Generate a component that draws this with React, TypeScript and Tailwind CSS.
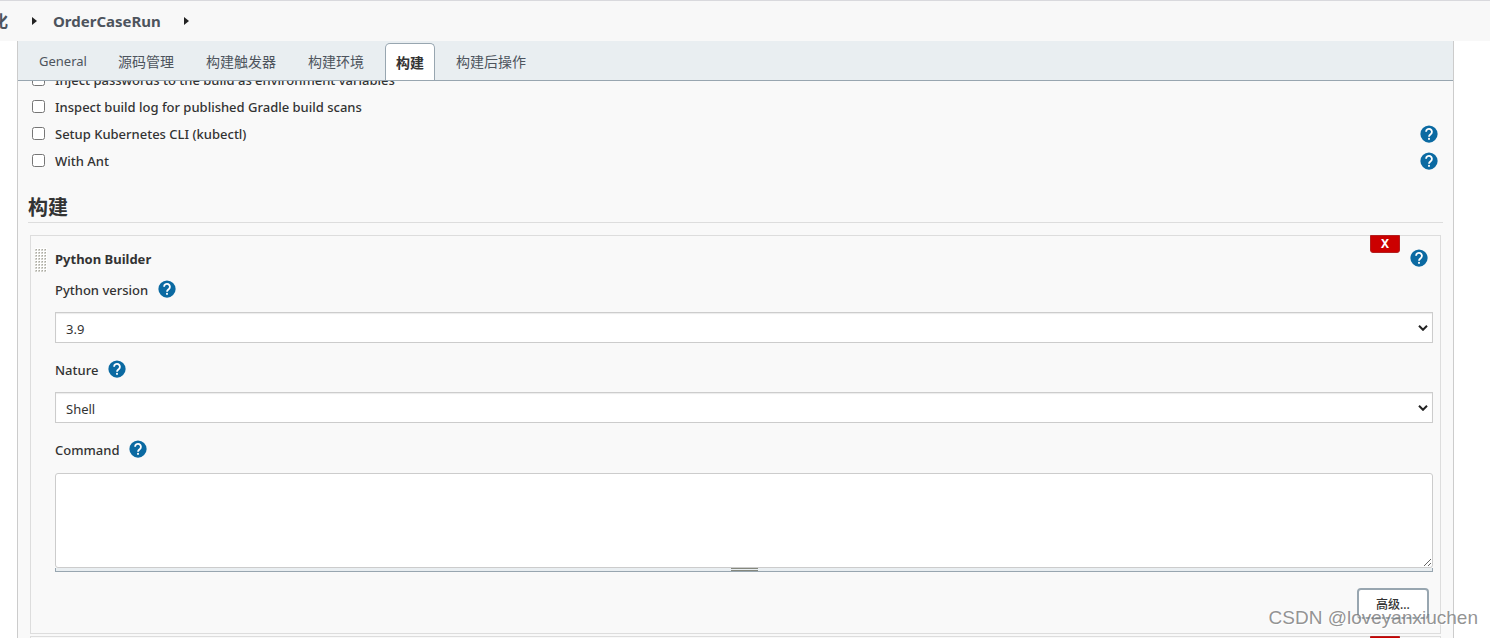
import type { ReactNode } from "react";

const uiFont =
  "font-['Noto_Sans','Noto_Sans_CJK_SC',sans-serif] text-[#333]";

function HelpButton({ topic }: { topic: string }) {
  return (
    <button type="button" aria-label={`Help for ${topic}`} className="mb-[2px] block size-[18px] shrink-0">
      <svg viewBox="0 0 24 24" className="size-full">
        <circle cx="12" cy="12" r="11.5" fill="#0b6aa2" />
        <path
          d="M8.1 9a3.9 3.9 0 1 1 6.4 3c-1.4 1.1-2.5 1.8-2.5 3.5"
          fill="none"
          stroke="#fff"
          strokeWidth="2.4"
        />
        <rect x="10.8" y="17.2" width="2.4" height="2.5" fill="#fff" />
      </svg>
    </button>
  );
}

function Caret() {
  return (
    <svg viewBox="0 0 5 8" className="h-2 w-[5px] shrink-0" aria-hidden="true">
      <path d="M0 0l5 4-5 4z" fill="#222" />
    </svg>
  );
}

const tabs = ["General", "源码管理", "构建触发器", "构建环境", "构建", "构建后操作"];

const options = [
  { id: "inject", label: "Inject passwords to the build as environment variables", help: false },
  { id: "gradle", label: "Inspect build log for published Gradle build scans", help: false },
  { id: "kubectl", label: "Setup Kubernetes CLI (kubectl)", help: true },
  { id: "ant", label: "With Ant", help: true },
];

function Grip() {
  return (
    <svg width="12" height="24" className="shrink-0" aria-hidden="true">
      <defs>
        <pattern id="grip" width="3" height="3" patternUnits="userSpaceOnUse">
          <rect width="3" height="3" fill="#fff" />
          <rect y="1" width="2" height="2" fill="#d2d2cc" />
          <rect x="1" y="1" width="1" height="1" fill="#aaa9a0" />
        </pattern>
      </defs>
      <rect width="12" height="24" fill="url(#grip)" />
    </svg>
  );
}

function Step({ children }: { children?: ReactNode }) {
  return (
    <div className="relative mx-[2px] border border-[#ddd]">
      <button
        type="button"
        aria-label="Delete"
        className="absolute -top-px right-10 h-[18px] w-[30px] rounded-b-[3px] border border-[#b32020] bg-[#c00] text-xs leading-4 font-bold text-white"
      >
        X
      </button>
      {children}
    </div>
  );
}

function FieldLabel({ htmlFor, children }: { htmlFor: string; children: string }) {
  return (
    <div className="flex h-5 items-center gap-[10px]">
      <label htmlFor={htmlFor} className="pt-[2px] font-medium">
        {children}
      </label>
      <HelpButton topic={children} />
    </div>
  );
}

function SelectField({ id, label, value }: { id: string; label: string; value: string }) {
  return (
    <>
      <FieldLabel htmlFor={id}>{label}</FieldLabel>
      <div className="mt-3 mb-[17px] grid items-center">
        <select
          id={id}
          className="col-start-1 row-start-1 h-[31px] w-full appearance-none border border-[#ccc] bg-white pt-[5px] pl-[10px] text-[13px] shadow-[inset_0_1px_1px_rgba(0,0,0,0.08)]"
        >
          <option>{value}</option>
        </select>
        <svg
          viewBox="0 0 10 6"
          className="pointer-events-none col-start-1 row-start-1 mr-[5px] h-[6px] w-[10px] justify-self-end"
          aria-hidden="true"
        >
          <path d="M1 .8l4 4 4-4" fill="none" stroke="#222" strokeWidth="2" />
        </svg>
      </div>
    </>
  );
}

export default function App() {
  return (
    <div className={`relative flex h-screen flex-col overflow-hidden bg-white text-[13px] ${uiFont}`}>
      <header className="flex h-[41px] shrink-0 items-center overflow-hidden border-t border-[#d9d9dd] bg-[#f8f8f8] font-bold text-[#4d545d]">
        <nav aria-label="Breadcrumb" className="-ml-2 flex items-center">
          <a href="#parent" className="w-10 text-base">化</a>
          <Caret />
          <a href="#job" className="mx-4 w-[115px] text-[15px]">OrderCaseRun</a>
          <Caret />
        </nav>
      </header>

      <main className="mr-9 ml-[17px] flex min-h-0 flex-1 flex-col overflow-hidden border-x border-[#ccc] bg-[#f9f9f9]">
        <div role="tablist" className="flex h-10 shrink-0 items-end border-b border-[#98a6b0] bg-[#e9eef1] pl-[10px] text-[14px] text-[#4d545d]">
          {tabs.map((tab) => {
            const active = tab === "构建";
            return (
              <button
                key={tab}
                type="button"
                role="tab"
                aria-selected={active}
                className={
                  active
                    ? "h-[37px] rounded-t-[5px] border border-b-0 border-[#98a6b0] bg-white px-[10px] font-bold text-[#333]"
                    : tab === "General"
                      ? "h-[37px] pr-5 pl-[11px] text-[13px]"
                      : tab === "构建后操作"
                        ? "h-[37px] px-[21px]"
                        : "h-[37px] pr-[21px] pl-[11px]"
                }
              >
                {tab}
              </button>
            );
          })}
        </div>

        <div className="min-h-0 flex-1 overflow-hidden px-[10px]">
          <div className="-mt-[14px]">
            {options.map((o) => (
              <div key={o.id} className="flex h-[27px] items-center pr-[5px] pl-1">
                <input id={o.id} type="checkbox" className="mb-[2px] size-[13px]" />
                <label htmlFor={o.id} className="ml-[10px] flex-1 font-medium">
                  {o.label}
                </label>
                {o.help && <HelpButton topic={o.label} />}
              </div>
            ))}
          </div>

          <h2 className="mt-[18px] mb-3 border-b border-[#ddd] pt-px text-[20px] leading-7 font-bold">构建</h2>

          <Step>
            <div className="flex pt-3 pr-[7px] pb-[14px] pl-1">
              <Grip />
              <div className="ml-2 min-w-0 flex-1">
                <div className="mb-[10px] flex h-[22px] items-center justify-between pr-[5px]">
                  <h3 className="pt-[2px] font-bold">Python Builder</h3>
                  <HelpButton topic="Python Builder" />
                </div>
                <SelectField id="version" label="Python version" value="3.9" />
                <SelectField id="nature" label="Nature" value="Shell" />
                <FieldLabel htmlFor="command">Command</FieldLabel>
                <textarea
                  id="command"
                  className="mt-[13px] block h-[95px] w-full rounded-[3px] border border-[#ccc] bg-white p-2"
                />
                <div className="flex h-1 items-center justify-center border border-t-0 border-[#98a6b0] bg-[#e9eef1]">
                  <div className="h-[3px] w-[27px] border-y border-[#85887e]" />
                </div>
                <div className="mt-4 flex justify-end pr-1">
                  <button
                    type="button"
                    className="h-[31px] w-[72px] rounded-[4px] border-2 border-[#98a6b0] bg-white pt-[2px] text-xs font-medium text-[#333]"
                  >
                    高级...
                  </button>
                </div>
              </div>
            </div>
          </Step>
          <div className="mt-[2px]">
            <Step>
              <div className="h-24" />
            </Step>
          </div>
        </div>
      </main>

      <div className="pointer-events-none absolute right-3 bottom-2 font-['Liberation_Sans',sans-serif] text-[19px] leading-6 text-[#777]/80 [text-shadow:1px_1px_0_#fff]">
        CSDN @loveyanxiuchen
      </div>
    </div>
  );
}
